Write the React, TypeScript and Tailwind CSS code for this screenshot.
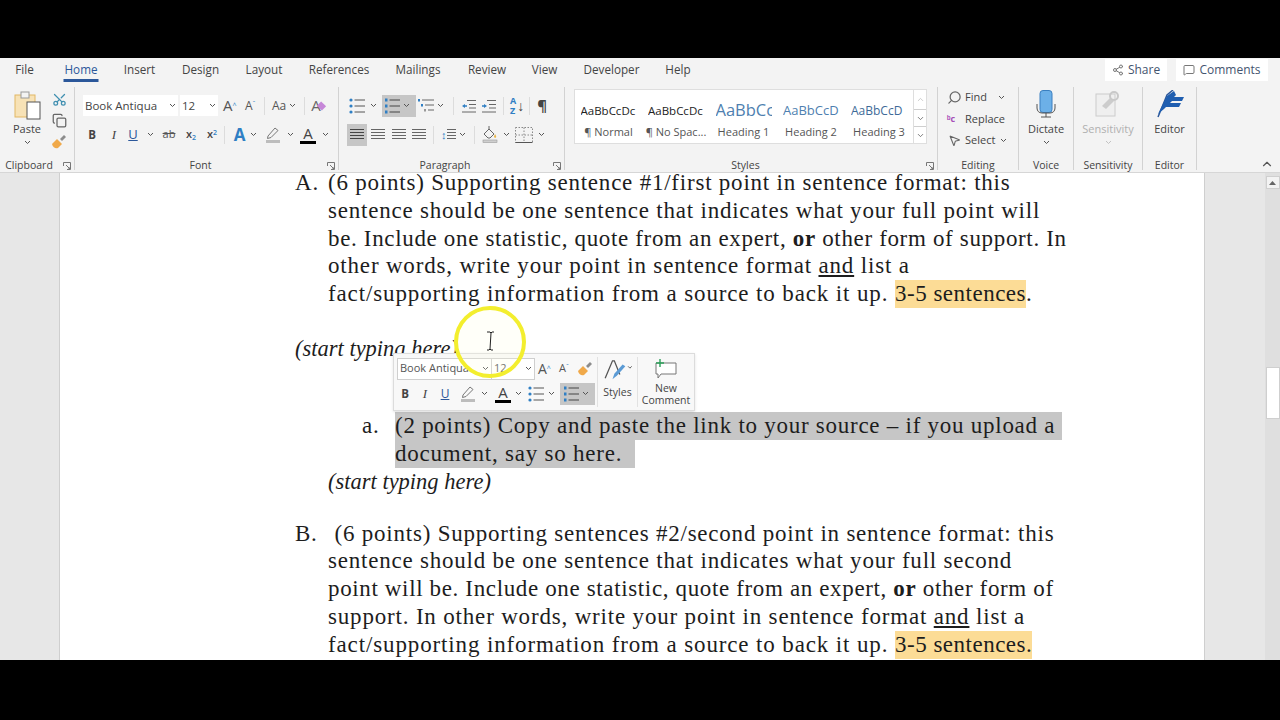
import React from "react";
import { ChevronDown, ChevronUp, Scissors, Copy, Search, MousePointer2, Share2, MessageSquare } from "lucide-react";

const Dn = ({ c = "" }: { c?: string }) => (
  <svg width="7" height="5" viewBox="0 0 7 5" className={`shrink-0 ${c}`}><path d="M1 1l2.5 2.5L6 1" fill="none" stroke="#555" strokeWidth="1" /></svg>
);

const Launcher = () => (
  <svg width="8" height="8" viewBox="0 0 8 8"><path d="M.5 4V.5H7.5V7.5H4M3 3l4 4M5 7h2V5" fill="none" stroke="#777" strokeWidth="1" /></svg>
);

const Lines = ({ n = 3, w = 14, c = "#555", gap = 3 }: { n?: number; w?: number; c?: string; gap?: number }) => (
  <svg width={w} height={n * gap + 2} viewBox={`0 0 ${w} ${n * gap + 2}`} className="shrink-0">
    {Array.from({ length: n }).map((_, i) => (
      <line key={i} x1="0" x2={w} y1={i * gap + 1.5} y2={i * gap + 1.5} stroke={c} strokeWidth="1" />
    ))}
  </svg>
);

const BulletIcon = () => (
  <svg width="16" height="16" viewBox="0 0 16 16">
    {[2, 8, 14].map((y) => (
      <g key={y}><circle cx="2" cy={y} r="1.6" fill="#2f7fc4" /><line x1="5.5" x2="16" y1={y} y2={y} stroke="#555" /></g>
    ))}
  </svg>
);

const NumIcon = () => (
  <svg width="16" height="16" viewBox="0 0 16 16">
    {[2, 8, 14].map((y) => (
      <g key={y}><rect x="1" y={y - 1.5} width="2.5" height="3" fill="#2f7fc4" /><line x1="5.5" x2="16" y1={y} y2={y} stroke="#444" /></g>
    ))}
  </svg>
);

const MultiIcon = () => (
  <svg width="16" height="16" viewBox="0 0 16 16">
    <rect x="0" y="1" width="2" height="2.5" fill="#2f7fc4" />
    <rect x="3" y="6" width="2" height="2.5" fill="#2f7fc4" />
    <rect x="6" y="11" width="2" height="2.5" fill="#999" />
    <line x1="4" x2="16" y1="2" y2="2" stroke="#666" />
    <line x1="7" x2="16" y1="7" y2="7" stroke="#666" />
    <line x1="10" x2="16" y1="12" y2="12" stroke="#666" />
  </svg>
);

const Indent = ({ flip }: { flip?: boolean }) => (
  <svg width="14" height="14" viewBox="0 0 14 14">
    <path d="M5 1.5h9M7 5.5h7M7 9h7M0 13h14" stroke="#666" fill="none" />
    <path d={flip ? "M5 5L2 3v1.2H0v1.6h2V7z" : "M0 5l3-2v1.2h2v1.6H3V7z"} fill="#2f7fc4" transform="translate(0 2)" />
  </svg>
);

const Pen = () => (
  <svg width="16" height="17" viewBox="0 0 16 17">
    <path d="M3 10L10 2l3 2.5-7 7-3.5 1z" fill="none" stroke="#777" />
    <rect x="1" y="14" width="14" height="3" fill="#bdbdbd" />
  </svg>
);

const Bucket = () => (
  <svg width="16" height="17" viewBox="0 0 16 17">
    <path d="M2 8l5-5 5 5-4 4H6z" fill="none" stroke="#666" />
    <path d="M7 3V0" stroke="#666" />
    <path d="M13 8c1 1.5 1.5 2.5 1 3.5-.8.6-2 .2-2-1z" fill="#e8b64a" />
    <rect x="1" y="14" width="14" height="2.5" fill="#cfcfcf" stroke="#9a9a9a" strokeWidth=".6" />
  </svg>
);

const Borders = () => (
  <svg width="18" height="16" viewBox="0 0 18 16">
    <path d="M.5.5h17v15H.5zM9 .5v15M.5 8h17" fill="none" stroke="#888" strokeDasharray="1.5 1.5" />
    <path d="M.5 15.5h17" stroke="#555" />
  </svg>
);

const FontColor = () => (
  <span className="flex h-[18px] w-4 flex-col items-center text-[15px] leading-[14px] text-[#444]">
    A<span className="mt-[1px] h-[3px] w-4 bg-black" />
  </span>
);

const Brush = () => (
  <svg width="16" height="16" viewBox="0 0 16 16">
    <path d="M1 10l5-5 5 5-4 4c-2 1-5 0-6-4z" fill="#f0a94a" />
    <path d="M9 5l4-4 2 2-4 4z" fill="#8c8c8c" />
  </svg>
);

const Sep = () => <div className="mt-[2px] h-[83px] w-px shrink-0 bg-[#d2d2d2]" />;
const VSep = ({ c = "" }: { c?: string }) => <span className={`h-[18px] w-px shrink-0 bg-[#dcdcdc] ${c}`} />;

const Group = ({ w, label, children, launcher }: { w: string; label: string; children: React.ReactNode; launcher?: boolean }) => (
  <div className={`${w} flex h-[87px] shrink-0 flex-col`}>
    <div className="flex-1">{children}</div>
    <div className={`relative flex h-[14px] items-center justify-center pt-[2px] text-[10.5px] text-[#444] ${launcher ? "pr-[20px]" : ""}`}>
      {label}
      {launcher && <span className="absolute right-[3px] top-[4px] flex"><Launcher /></span>}
    </div>
  </div>
);

const Tab = ({ label, active, c }: { label: string; active?: boolean; c: string }) => (
  <div className={`${c} relative flex h-[24px] shrink-0 items-center justify-center whitespace-nowrap text-[11.7px] ${active ? "text-[#2b579a] font-medium" : "text-[#444]"}`}>
    {label}
    {active && <span className="absolute bottom-0 left-1/2 h-[3px] w-[35px] -translate-x-1/2 bg-[#2b579a]" />}
  </div>
);

const Style = ({ top, label, cls, w }: { top: string; label: string; cls: string; w: string }) => (
  <div className={`${w} flex shrink-0 flex-col items-center overflow-hidden`}>
    <div className={`flex h-[22px] w-[56px] items-center overflow-hidden whitespace-nowrap ${cls}`}>{top}</div>
    <div className="mt-[3px] whitespace-nowrap text-[11px] leading-[14px] text-[#555]">{label}</div>
  </div>
);

const Line = ({ children, t = "" }: { children: React.ReactNode; t?: string }) => (
  <div className={`h-[27.8px] whitespace-nowrap ${t}`}>{children}</div>
);

const Mark = ({ children }: { children: React.ReactNode }) => <span className="inline-block h-[28px] bg-[#fcdc96] tracking-[0.5px]">{children}</span>;
const Sel = ({ children }: { children: React.ReactNode }) => <span className="inline-block h-[28px] bg-[#c6c6c6]">{children}</span>;

export default function App() {
  return (
    <div className="flex h-[720px] w-[1280px] flex-col overflow-hidden bg-black font-['Liberation_Sans',sans-serif]">
      <div className="h-[58px] shrink-0" />
      {/* ribbon */}
      <div className="relative h-[115px] shrink-0 border-b border-[#d6d6d6] bg-[#f3f3f3]">
        <div className="flex h-[24px] items-center pl-[16px] font-['Open_Sans',sans-serif]">
          <Tab label="File" c="w-[17px]" />
          <Tab label="Home" active c="ml-[31px] w-[34px]" />
          <Tab label="Insert" c="ml-[26px] w-[31px]" />
          <Tab label="Design" c="ml-[27px] w-[37px]" />
          <Tab label="Layout" c="ml-[27px] w-[36px]" />
          <Tab label="References" c="ml-[27px] w-[60px]" />
          <Tab label="Mailings" c="ml-[26px] w-[46px]" />
          <Tab label="Review" c="ml-[27px] w-[38px]" />
          <Tab label="View" c="ml-[25px] w-[27px]" />
          <Tab label="Developer" c="ml-[26px] w-[55px]" />
          <Tab label="Help" c="ml-[26px] w-[26px]" />
          <div className="ml-auto mr-[12px] flex items-center gap-[9px]">
            <div className="flex h-[22px] w-[62px] items-center justify-center gap-[4px] bg-white text-[12px] text-[#44546f]">
              <Share2 size={12} className="text-[#777]" />Share
            </div>
            <div className="flex h-[22px] w-[92px] items-center justify-center gap-[4px] bg-white text-[12px] text-[#44546f]">
              <MessageSquare size={12} className="text-[#777]" />Comments
            </div>
          </div>
        </div>
        <div className="flex h-[90px] items-start pl-[4px] pt-[3px] font-['Open_Sans',sans-serif]">
          {/* Clipboard */}
          <Group w="w-[70px]" label="Clipboard" launcher>
            <div className="flex pl-[9px] pt-[6px]">
              <div className="flex w-[28px] flex-col items-center">
                <svg width="28" height="30" viewBox="0 0 28 30">
                  <rect x="2" y="4" width="20" height="22" fill="#f7e2b6" stroke="#e2b765" />
                  <rect x="8" y="1" width="8" height="6" fill="#f3f3f3" stroke="#999" />
                  <rect x="14" y="11" width="13" height="17" fill="#fff" stroke="#555" />
                </svg>
                <span className="mt-[1px] text-[11px] leading-[14px] text-[#444]">Paste</span>
                <Dn c="mt-[4px]" />
              </div>
              <div className="ml-[10px] flex flex-col items-center gap-[6px] pt-[1px]">
                <Scissors size={15} className="rotate-[-90deg] text-[#3f8fb0]" />
                <Copy size={15} className="text-[#666]" />
                <Brush />
              </div>
            </div>
          </Group>
          <Sep />
          {/* Font */}
          <div className="w-[8px] shrink-0" />
          <Group w="w-[255px]" label="Font" launcher>
            <div className="mt-[8px] flex h-[25px] items-center">
              <div className="flex h-[21px] w-[95px] shrink-0 items-center justify-between bg-white px-[2px] text-[11.5px] text-[#444]">Book Antiqua<Dn /></div>
              <div className="ml-[2px] flex h-[21px] w-[38px] shrink-0 items-center justify-between bg-white px-[2px] text-[11.5px] text-[#444]">12<Dn /></div>
              <span className="ml-[5px] w-[18px] whitespace-nowrap text-[15px] text-[#555]">A<sup className="text-[7px] text-[#2f7fc4]">^</sup></span>
              <span className="ml-[4px] w-[14px] whitespace-nowrap text-[12px] text-[#555]">A<sup className="text-[7px] text-[#2f7fc4]">ˇ</sup></span>
              <VSep c="ml-[5px]" />
              <span className="ml-[7px] flex items-center gap-[3px] text-[12px] text-[#555]">Aa<Dn /></span>
              <VSep c="ml-[8px]" />
              <span className="ml-[6px] flex text-[15px] text-[#666]">A<span className="-ml-[3px] mt-[9px] h-[6px] w-[7px] rotate-45 bg-[#c687d8]" /></span>
            </div>
            <div className="mt-[4px] flex h-[25px] items-center text-[13px] text-[#444]">
              <span className="ml-[3px] w-[12px] text-center text-[11.5px] font-bold">B</span>
              <span className="ml-[10px] w-[12px] text-center font-['Liberation_Serif',serif] italic">I</span>
              <span className="ml-[7px] w-[12px] text-center text-[#2b579a] underline">U</span>
              <Dn c="ml-[8px]" />
              <span className="ml-[8px] w-[14px] text-center text-[11px] text-[#555] line-through">ab</span>
              <span className="ml-[10px] w-[11px] whitespace-nowrap text-[11px] font-semibold">x<sub className="text-[7px] text-[#2f7fc4]">2</sub></span>
              <span className="ml-[10px] w-[11px] whitespace-nowrap text-[11px] font-semibold">x<sup className="text-[7px] text-[#2f7fc4]">2</sup></span>
              <VSep c="ml-[6px]" />
              <span className="ml-[7px] w-[15px] text-center text-[17px] font-bold leading-none text-[#2f7fc4]">A</span>
              <Dn c="ml-[3px]" />
              <span className="ml-[8px] flex"><Pen /></span>
              <Dn c="ml-[6px]" />
              <span className="ml-[6px] flex"><FontColor /></span>
              <Dn c="ml-[6px]" />
            </div>
          </Group>
          <Sep />
          <div className="w-[7px] shrink-0" />
          {/* Paragraph */}
          <Group w="w-[218px]" label="Paragraph" launcher>
            <div className="mt-[8px] flex h-[25px] items-center">
              <span className="ml-[3px] flex"><BulletIcon /></span><Dn c="ml-[5px]" />
              <span className="ml-[5px] flex h-[22px] w-[34px] shrink-0 items-center gap-[3px] bg-[#c6c6c6] pl-[2px]"><NumIcon /><Dn /></span>
              <span className="ml-[2px] flex"><MultiIcon /></span><Dn c="ml-[3px]" />
              <VSep c="ml-[9px]" />
              <span className="ml-[8px] flex"><Indent /></span>
              <span className="ml-[6px] flex"><Indent flip /></span>
              <VSep c="ml-[7px]" />
              <span className="ml-[6px] text-[9px] font-bold leading-[10px] text-[#2f7fc4]">A<br />Z</span>
              <span className="ml-[1px] text-[14px] leading-none text-[#444]">↓</span>
              <VSep c="ml-[5px]" />
              <span className="ml-[7px] text-[15px] font-bold text-[#444]">¶</span>
            </div>
            <div className="mt-[4px] flex h-[25px] items-center">
              <span className="ml-[1px] flex h-[22px] w-[20px] shrink-0 items-center justify-center bg-[#c6c6c6]"><Lines w={14} n={4} c="#444" /></span>
              <span className="ml-[4px] flex"><Lines w={14} n={4} c="#666" /></span>
              <span className="ml-[7px] flex"><Lines w={14} n={4} c="#666" /></span>
              <span className="ml-[6px] flex"><Lines w={14} n={4} c="#666" /></span>
              <VSep c="ml-[7px]" />
              <span className="ml-[7px] flex items-center text-[11px] leading-[14px] text-[#2f7fc4]">↕<Lines w={9} n={4} c="#666" /></span><Dn c="ml-[3px]" />
              <VSep c="ml-[8px]" />
              <span className="ml-[7px] flex"><Bucket /></span><Dn c="ml-[5px]" />
              <span className="ml-[5px] flex"><Borders /></span><Dn c="ml-[5px]" />
            </div>
          </Group>
          <Sep />
          <div className="w-[9px] shrink-0" />
          {/* Styles */}
          <Group w="w-[363px]" label="Styles" launcher>
            <div className="mt-[4px] flex h-[55px] w-[353px] items-stretch border border-[#dedede] bg-white">
              <div className="flex flex-1 items-center pt-[5px]">
                <Style w="w-[67px]" top="AaBbCcDc" label="¶ Normal" cls="text-[11.5px] text-[#222]" />
                <Style w="w-[68px]" top="AaBbCcDc" label="¶ No Spac..." cls="text-[11.5px] text-[#222]" />
                <Style w="w-[67px]" top="AaBbCc" label="Heading 1" cls="text-[16.5px] text-[#4e7fb0]" />
                <Style w="w-[68px]" top="AaBbCcD" label="Heading 2" cls="text-[13px] text-[#4e7fb0]" />
                <Style w="w-[68px]" top="AaBbCcD" label="Heading 3" cls="text-[12px] text-[#3e6a98]" />
              </div>
              <div className="flex w-[14px] flex-col border-l border-[#dedede]">
                <div className="flex h-[19px] items-center justify-center"><ChevronUp size={9} className="text-[#bbb]" /></div>
                <div className="flex h-[18px] items-center justify-center border-y border-[#cfcfcf]"><ChevronDown size={9} className="text-[#555]" /></div>
                <div className="flex flex-1 items-center justify-center"><ChevronDown size={9} className="text-[#555]" /></div>
              </div>
            </div>
          </Group>
          <Sep />
          {/* Editing */}
          <Group w="w-[80px]" label="Editing">
            <div className="flex flex-col gap-[0.5px] pl-[9px] pt-[2px] text-[11px] text-[#444]">
              <div className="flex h-[21px] items-center gap-[3px]"><Search size={15} className="scale-x-[-1] text-[#666]" />Find<Dn c="ml-[8px]" /></div>
              <div className="flex h-[21px] items-center gap-[4px]"><span className="w-[14px] text-[9px] font-bold leading-[8px] text-[#a64fb8]">ᵇc</span>Replace</div>
              <div className="flex h-[21px] items-center gap-[4px] pl-[1px]"><MousePointer2 size={13} className="text-[#666]" />Select<Dn c="ml-[1px]" /></div>
            </div>
          </Group>
          <Sep />
          <Group w="w-[54px]" label="Voice">
            <div className="flex flex-col items-center pt-[5px]">
              <svg width="20" height="28" viewBox="0 0 20 28">
                <rect x="4" y="0.5" width="12" height="22" rx="3" fill="#6cb0e8" stroke="#3a7fc0" />
                <path d="M1 14v4c0 3 2 5 5 5h8c3 0 5-2 5-5v-4M10 23v4M5 27h10" fill="none" stroke="#555" />
              </svg>
              <span className="mt-[4px] text-[11px] leading-[14px] text-[#444]">Dictate</span>
              <Dn c="mt-[4px]" />
            </div>
          </Group>
          <Sep />
          <Group w="w-[68px]" label="Sensitivity">
            <div className="flex flex-col items-center pt-[5px]">
              <svg width="28" height="28" viewBox="0 0 28 28">
                <rect x="2" y="4" width="19" height="22" fill="#efefef" stroke="#ccc" />
                <path d="M8 16l8-8 4 3-8 8z" fill="#ccc" />
                <circle cx="20" cy="6" r="4" fill="none" stroke="#c8c8c8" strokeWidth="2" />
              </svg>
              <span className="mt-[4px] text-[11px] leading-[14px] text-[#b0b0b0]">Sensitivity</span>
              <Dn c="mt-[4px] opacity-30" />
            </div>
          </Group>
          <Sep />
          <Group w="w-[53px]" label="Editor">
            <div className="flex flex-col items-center pt-[5px]">
              <svg width="30" height="28" viewBox="0 0 30 28">
                <path d="M3 27L12 5l6-5" fill="none" stroke="#2b579a" strokeWidth="1.5" />
                <path d="M12 6L19 1l2 4-2 2h10l-2 4H17l-2 2h11l-2 4H11l-2 2-6 5z" fill="#1f5eb0" />
              </svg>
              <span className="mt-[4px] text-[11px] leading-[14px] text-[#444]">Editor</span>
            </div>
          </Group>
          <Sep />
        </div>
        <ChevronUp size={14} className="absolute bottom-[1px] right-[6px] text-[#555]" />
      </div>
      {/* document */}
      <div className="relative flex h-[487px] shrink-0 overflow-hidden bg-[#e7e7e7]">
        <div className="ml-[59px] h-full w-[1146px] shrink-0 overflow-hidden border-x border-[#cfcfcf] bg-white pl-[235px] font-['Liberation_Serif',serif] text-[23px] leading-[27.8px] tracking-[0.78px] text-[#1d1d1d]">
          <div className="-mt-[4px] flex">
            <span className="w-[33px] shrink-0">A.</span>
            <div>
              <Line>(6 points) Supporting sentence #1/first point in sentence format: this</Line>
              <Line>sentence should be one sentence that indicates what your full point will</Line>
              <Line t="tracking-[0.66px]">be. Include one statistic, quote from an expert, <b>or</b> other form of support. In</Line>
              <Line t="tracking-[0.82px]">other words, write your point in sentence format <u>and</u> list a</Line>
              <Line t="tracking-[0.87px]">fact/supporting information from a source to back it up. <Mark>3-5 sentences</Mark>.</Line>
            </div>
          </div>
          <div className="mt-[27px] h-[28px] text-[22.5px] italic tracking-normal">(start typing here)</div>
          <div className="mt-[49px] flex pl-[67px]">
            <span className="w-[33px] shrink-0">a.</span>
            <div>
              <Line t="tracking-[0.74px]"><Sel>(2 points) Copy and paste the link to your source – if you upload a&nbsp;</Sel></Line>
              <Line><Sel>document, say so here.&nbsp;&nbsp;</Sel></Line>
            </div>
          </div>
          <div className="ml-[33px] h-[28px] text-[22.5px] italic tracking-normal">(start typing here)</div>
          <div className="mt-[24px] flex">
            <span className="w-[33px] shrink-0">B.</span>
            <div>
              <Line>&nbsp;(6 points) Supporting sentences #2/second point in sentence format: this</Line>
              <Line>sentence should be one sentence that indicates what your full second</Line>
              <Line t="tracking-[0.64px]">point will be. Include one statistic, quote from an expert, <b>or</b> other form of</Line>
              <Line t="tracking-[0.82px]">support. In other words, write your point in sentence format <u>and</u> list a</Line>
              <Line t="tracking-[0.87px]">fact/supporting information from a source to back it up. <Mark>3-5 sentences.</Mark></Line>
            </div>
          </div>
        </div>
        {/* scrollbar */}
        <div className="ml-auto flex h-full w-[15px] flex-col items-center bg-[#dfdfdf] pt-[3px]">
          <div className="flex h-[13px] w-[14px] items-center justify-center border border-[#cfcfcf] bg-[#f3f3f3]">
            <svg width="7" height="4" viewBox="0 0 7 4"><path d="M3.5 0L7 4H0z" fill="#666" /></svg>
          </div>
          <div className="mt-[178px] h-[52px] w-[14px] border border-[#cfcfcf] bg-white" />
        </div>
        {/* mini toolbar */}
        <div className="absolute left-[393px] top-[180px] flex h-[58px] w-[302px] flex-col border border-[#dcdcdc] bg-[#f8f8f8] font-['Open_Sans',sans-serif] shadow-sm">
          <div className="flex h-full">
            <div className="w-[203px] pl-[3px] pt-[2px]">
              <div className="flex h-[25px] items-center">
                <div className="flex h-[22px] w-[95px] shrink-0 items-center justify-between border border-[#cfcfcf] bg-white px-[2px] text-[11px] text-[#555]">Book Antiqua<Dn /></div>
                <div className="flex h-[22px] w-[43px] shrink-0 items-center justify-between border border-l-0 border-[#cfcfcf] bg-white px-[2px] text-[11px] text-[#555]">12<Dn /></div>
                <span className="ml-[3px] w-[15px] whitespace-nowrap text-[14px] text-[#555]">A<sup className="text-[7px] text-[#2f7fc4]">^</sup></span>
                <span className="ml-[6px] w-[13px] whitespace-nowrap text-[11px] text-[#555]">A<sup className="text-[7px] text-[#2f7fc4]">ˇ</sup></span>
                <span className="ml-[5px] flex"><Brush /></span>
              </div>
              <div className="flex h-[25px] items-center text-[#444]">
                <span className="ml-[3px] w-[10px] text-center text-[11.5px] font-bold">B</span>
                <span className="ml-[10px] w-[10px] text-center font-['Liberation_Serif',serif] text-[13px] italic">I</span>
                <span className="ml-[10px] w-[10px] text-center text-[12px] text-[#2b579a] underline">U</span>
                <span className="ml-[10px] flex"><Pen /></span><Dn c="ml-[5px]" />
                <span className="ml-[7px] flex"><FontColor /></span><Dn c="ml-[4px]" />
                <span className="ml-[6px] flex"><BulletIcon /></span><Dn c="ml-[4px]" />
                <span className="ml-[5px] flex h-[22px] w-[35px] shrink-0 items-center gap-[3px] bg-[#c6c6c6] pl-[3px]"><NumIcon /><Dn /></span>
              </div>
            </div>
            <div className="my-[3px] w-px bg-[#e2e2e2]" />
            <div className="flex w-[39px] flex-col items-center pt-[5px]">
              <svg width="30" height="22" viewBox="0 0 30 24">
                <path d="M1 21L9 2h2l6 15" fill="none" stroke="#555" strokeWidth="1.4" />
                <path d="M9 22l2-6 9-10 3 2-9 10z" fill="#5b9bd5" />
                <path d="M26 8l2 2 2-2" fill="none" stroke="#555" />
              </svg>
              <span className="mt-[4px] text-[10.5px] leading-[14px] text-[#444]">Styles</span>
            </div>
            <div className="my-[3px] w-px bg-[#e2e2e2]" />
            <div className="flex flex-1 flex-col items-center pt-[5px]">
              <svg width="24" height="20" viewBox="0 0 24 20">
                <path d="M2 4h20v11H7l-3 4v-4H2z" fill="#fff" stroke="#777" />
                <path d="M6 0v8M2 4h8" stroke="#2ca05a" strokeWidth="1.4" />
              </svg>
              <span className="mt-[3px] text-center text-[10.5px] leading-[12px] text-[#444]">New<br />Comment</span>
            </div>
          </div>
        </div>
        {/* cursor highlight */}
        <div className="absolute left-[454px] top-[133px] h-[72px] w-[72px] rounded-full border-[4px] border-[#f3ee2e] bg-[#fffde0]/20" />
        <svg width="9" height="20" viewBox="0 0 9 20" className="absolute left-[486px] top-[158px]">
          <path d="M1 1h3l1 1 1-1h2M5 2L4 18M1 19h2l1-1 1 1h2" fill="none" stroke="#222" strokeWidth="1" />
        </svg>
      </div>
      <div className="flex-1" />
    </div>
  );
}
